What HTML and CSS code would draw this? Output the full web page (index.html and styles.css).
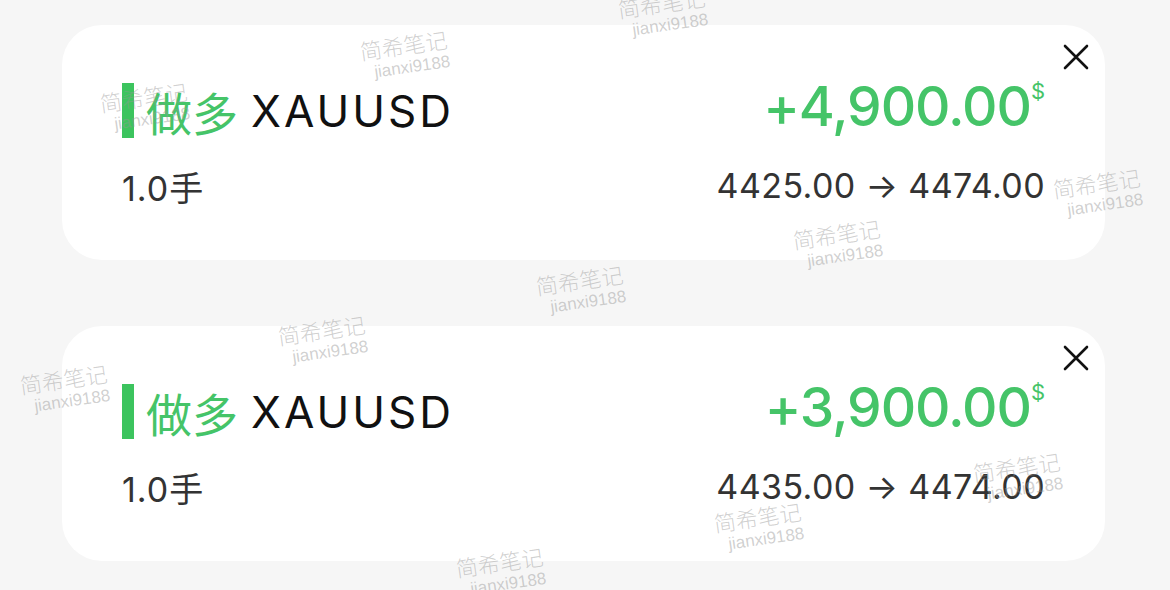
FILE: index.html
```html
<!DOCTYPE html>
<html lang="zh-CN">
<head>
    <meta charset="UTF-8">
    <meta name="viewport" content="width=device-width, initial-scale=1.0">
    <title>持仓</title>
    <link rel="stylesheet" href="styles.css">
</head>
<body>
    <div class="page">
        <div class="card">
            <div class="left">
                <div class="title">
                    <span class="bar"></span>
                    <span class="side">做多</span>
                    <span class="symbol">XAUUSD</span>
                </div>
                <div class="lots">1.0手</div>
            </div>
            <div class="right">
                <div class="profit">+4,900.00<sup>$</sup></div>
                <div class="prices">4425.00 → 4474.00</div>
            </div>
            <button class="close">
                <svg width="26" height="26" viewBox="0 0 26 26"><path d="M2 2L24 24M24 2L2 24" stroke="#111" stroke-width="2.6" stroke-linecap="round"/></svg>
            </button>
        </div>

        <div class="card">
            <div class="left">
                <div class="title">
                    <span class="bar"></span>
                    <span class="side">做多</span>
                    <span class="symbol">XAUUSD</span>
                </div>
                <div class="lots">1.0手</div>
            </div>
            <div class="right">
                <div class="profit">+3,900.00<sup>$</sup></div>
                <div class="prices">4435.00 → 4474.00</div>
            </div>
            <button class="close">
                <svg width="26" height="26" viewBox="0 0 26 26"><path d="M2 2L24 24M24 2L2 24" stroke="#111" stroke-width="2.6" stroke-linecap="round"/></svg>
            </button>
        </div>
    </div>

    <div class="watermarks">
        <div class="wm wm-1"><span>简希笔记</span><span>jianxi9188</span></div>
        <div class="wm wm-2"><span>简希笔记</span><span>jianxi9188</span></div>
        <div class="wm wm-3"><span>简希笔记</span><span>jianxi9188</span></div>
        <div class="wm wm-4"><span>简希笔记</span><span>jianxi9188</span></div>
        <div class="wm wm-5"><span>简希笔记</span><span>jianxi9188</span></div>
        <div class="wm wm-6"><span>简希笔记</span><span>jianxi9188</span></div>
        <div class="wm wm-7"><span>简希笔记</span><span>jianxi9188</span></div>
        <div class="wm wm-8"><span>简希笔记</span><span>jianxi9188</span></div>
        <div class="wm wm-9"><span>简希笔记</span><span>jianxi9188</span></div>
        <div class="wm wm-10"><span>简希笔记</span><span>jianxi9188</span></div>
        <div class="wm wm-11"><span>简希笔记</span><span>jianxi9188</span></div>
    </div>
</body>
</html>
```

FILE: styles.css
```css
body {
    margin: 0;
    background-color: #f6f6f6;
    font-family: Inter, "Noto Sans CJK SC", sans-serif;
    overflow: hidden;
}
.page {
    height: 590px;
    box-sizing: border-box;
    padding: 25px 65px 0 62px;
}
.card {
    position: relative;
    display: flex;
    justify-content: space-between;
    height: 235px;
    box-sizing: border-box;
    padding: 58px 60px 0;
    background-color: #fff;
    border-radius: 40px;
}
.card + .card {
    margin-top: 66px;
}
.title {
    display: flex;
    align-items: center;
    height: 55px;
}
.bar {
    width: 12px;
    height: 55px;
    margin-right: 12px;
    background-color: #3cc45e;
}
.side {
    font-family: "Noto Sans CJK SC", sans-serif;
    font-size: 46px;
    color: #45c468;
}
.symbol {
    margin-left: 13px;
    font-size: 44px;
    letter-spacing: 3px;
    color: #111;
}
.lots {
    margin-top: 24px;
    font-size: 34px;
    letter-spacing: 1px;
    color: #333;
}
.right {
    display: flex;
    flex-direction: column;
    align-items: flex-end;
}
.profit {
    margin-top: -4px;
    font-size: 55px;
    font-weight: 500;
    line-height: 54px;
    color: #45c468;
    letter-spacing: -1.1px;
}
.profit sup {
    position: relative;
    top: 1px;
    margin-left: 0;
    font-size: 22px;
    font-weight: 400;
    letter-spacing: 0;
    vertical-align: top;
    line-height: 22px;
}
.prices {
    margin-top: 32px;
    font-size: 34px;
    letter-spacing: 0.4px;
    color: #333;
}
.close {
    position: absolute;
    top: 19px;
    right: 16px;
    padding: 0;
    border: none;
    background: none;
    line-height: 0;
}
.watermarks {
    position: absolute;
    top: 0;
    left: 0;
    width: 100%;
    height: 100%;
    pointer-events: none;
}
.wm {
    position: absolute;
    display: flex;
    flex-direction: column;
    align-items: flex-end;
    width: 92px;
    color: rgba(150, 150, 150, 0.45);
    transform: rotate(-8deg);
    transform-origin: left top;
    font-family: "Liberation Sans", "Noto Sans CJK SC", sans-serif;
}
.wm span:first-child {
    font-family: "Noto Sans CJK SC", sans-serif;
    font-size: 22px;
    font-weight: 300;
    line-height: 26px;
}
.wm span:last-child {
    font-size: 17px;
    line-height: 22px;
}
.wm-1 { left: 612px; top: -4px; }
.wm-2 { left: 354px; top: 38px; }
.wm-3 { left: 94px; top: 90px; }
.wm-4 { left: 1047px; top: 176px; }
.wm-5 { left: 787px; top: 227px; }
.wm-6 { left: 530px; top: 273px; }
.wm-7 { left: 272px; top: 323px; }
.wm-8 { left: 14px; top: 372px; }
.wm-9 { left: 967px; top: 460px; }
.wm-10 { left: 708px; top: 510px; }
.wm-11 { left: 450px; top: 555px; }
```
